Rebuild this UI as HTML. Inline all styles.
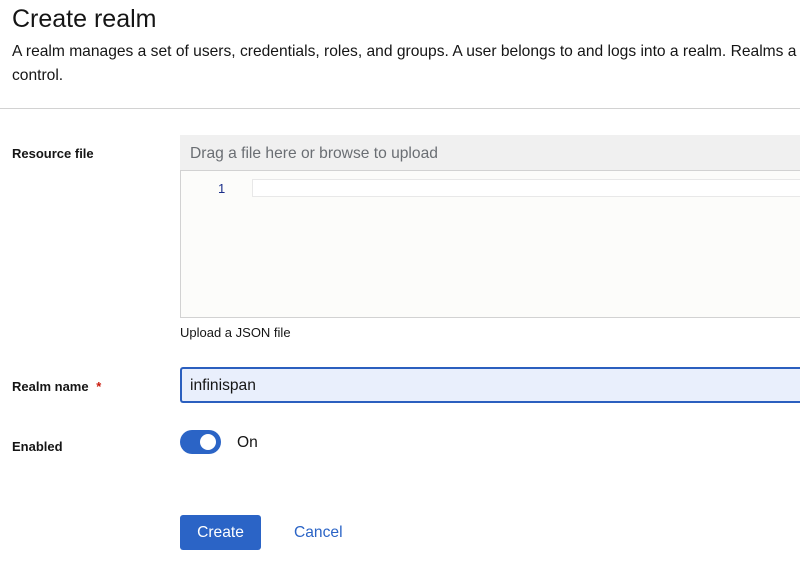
<!DOCTYPE html>
<html><head><style>
*{box-sizing:border-box;margin:0;padding:0}
body{width:800px;height:569px;overflow:hidden;background:#fff;font-family:"Liberation Sans",sans-serif;color:#151515;position:relative}
.a{position:absolute;white-space:nowrap}
</style></head><body>
<div class="a" style="left:12px;top:5px;font-size:25px">Create realm</div>
<div class="a" style="left:12px;top:40px;font-size:15.6px;line-height:24px">A realm manages a set of users, credentials, roles, and groups. A user belongs to and logs into a realm. Realms a<br>control.</div>
<div class="a" style="left:0;top:108px;width:800px;height:1px;background:#d2d2d2"></div>
<div class="a" style="left:12px;top:146px;font-size:13px;font-weight:bold">Resource file</div>
<div class="a" style="left:180px;top:135px;width:630px;height:183px;border:1px solid #d2d2d2;background:#fcfcfa"></div>
<div class="a" style="left:180px;top:135px;width:630px;height:36px;background:#f0f0f0;border-bottom:1px solid #d2d2d2"></div>
<div class="a" style="left:190px;top:145px;font-size:15.6px;color:#6a6e73">Drag a file here or browse to upload</div>
<div class="a" style="left:218px;top:181px;font-size:13px;color:#1a2e8a">1</div>
<div class="a" style="left:252px;top:179px;width:560px;height:18px;border:1px solid #e8e8e8;background:#fff"></div>
<div class="a" style="left:180px;top:325px;font-size:13px">Upload a JSON file</div>
<div class="a" style="left:12px;top:379px;font-size:13px;font-weight:bold">Realm name <span style="color:#c9190b;margin-left:4px">*</span></div>
<div class="a" style="left:180px;top:367px;width:630px;height:36px;border:2px solid #2b5fbf;border-right:none;border-radius:3px 0 0 3px;background:#e9effc"></div>
<div class="a" style="left:190px;top:377px;font-size:15.6px">infinispan</div>
<div class="a" style="left:12px;top:439px;font-size:13px;font-weight:bold">Enabled</div>
<div class="a" style="left:180px;top:430px;width:41px;height:24px;border-radius:12px;background:#2b64c6"></div>
<div class="a" style="left:200px;top:434px;width:16px;height:16px;border-radius:50%;background:#fff"></div>
<div class="a" style="left:237px;top:434px;font-size:15.6px">On</div>
<div class="a" style="left:180px;top:515px;width:81px;height:35px;border-radius:3px;background:#2b64c6;color:#fff;font-size:15.6px;text-align:center;line-height:36px">Create</div>
<div class="a" style="left:294px;top:524px;font-size:15.6px;color:#2b64c6">Cancel</div>
</body></html>
